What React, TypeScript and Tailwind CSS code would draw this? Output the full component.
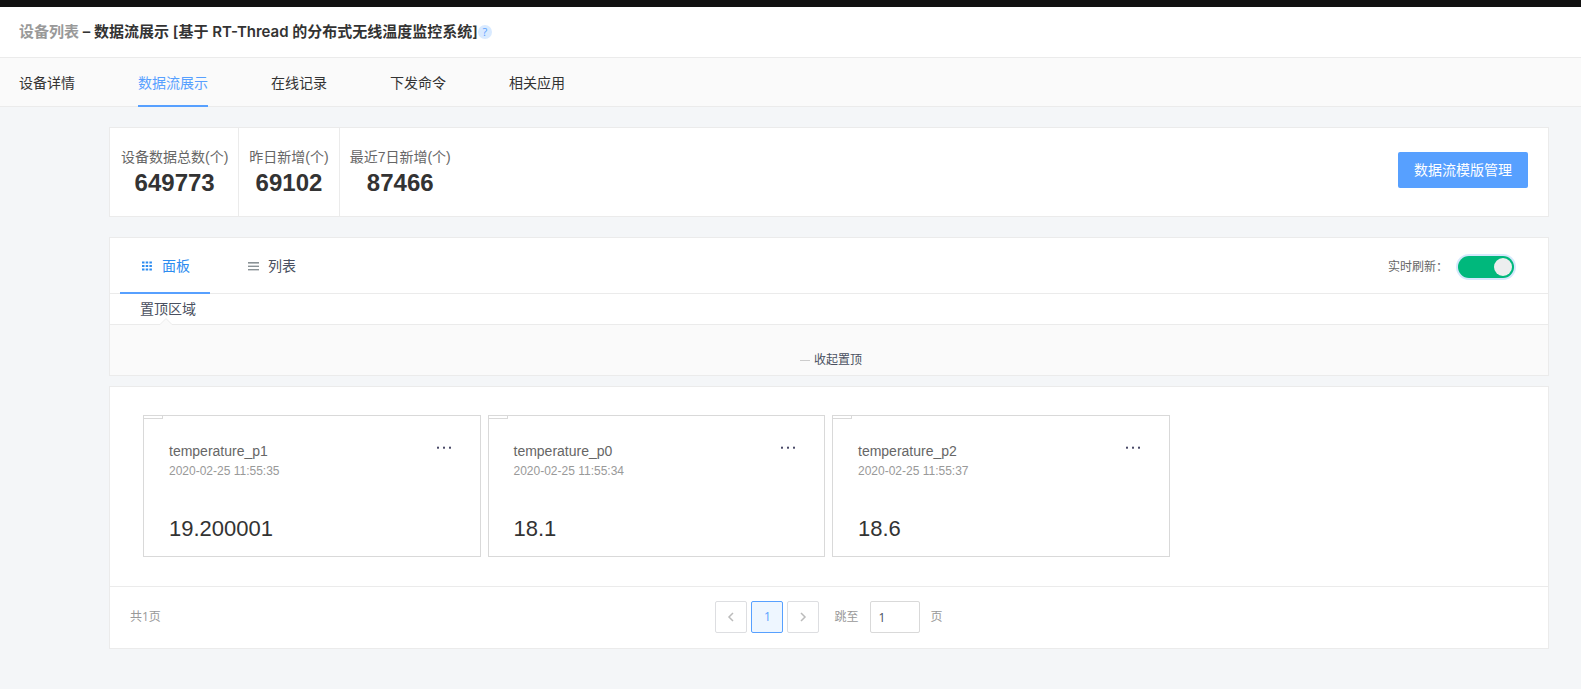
import { useState } from 'react';

type Stream = {
  name: string;
  time: string;
  value: string;
};

const navItems = ['设备详情', '数据流展示', '在线记录', '下发命令', '相关应用'];

const stats = [
  { label: '设备数据总数(个)', value: '649773' },
  { label: '昨日新增(个)', value: '69102' },
  { label: '最近7日新增(个)', value: '87466' },
];

const streams: Stream[] = [
  { name: 'temperature_p1', time: '2020-02-25 11:55:35', value: '19.200001' },
  { name: 'temperature_p0', time: '2020-02-25 11:55:34', value: '18.1' },
  { name: 'temperature_p2', time: '2020-02-25 11:55:37', value: '18.6' },
];

const GridIcon = () => (
  <svg className="w-[10px] h-[10px]" viewBox="0 0 10 10" fill="currentColor" aria-hidden="true">
    {[0.5, 4, 7.5].map((y) =>
      [0, 3.7, 7.4].map((x) => <rect key={`${x}-${y}`} x={x} y={y} width="2.5" height="2" />)
    )}
  </svg>
);

const ListIcon = () => (
  <svg className="w-[11px] h-[10px] text-[#8a9296]" viewBox="0 0 11 10" fill="currentColor" aria-hidden="true">
    <rect x="0" y="1" width="11" height="1.6" />
    <rect x="0" y="4.6" width="11" height="1.4" />
    <rect x="0" y="8" width="11" height="1.4" />
  </svg>
);

const Chevron = ({ d }: { d: string }) => (
  <svg className="w-[10px] h-[10px]" viewBox="0 0 10 10" fill="none" stroke="currentColor" strokeWidth="1.5" aria-hidden="true">
    <path d={d} />
  </svg>
);

const StreamCard = ({ stream }: { stream: Stream }) => (
  <article className="relative h-[142px] border border-[#d9d9d9] pl-[25px] pr-7 pt-[25px] font-['Liberation_Sans',sans-serif]">
    <span className="absolute left-0 top-0 w-[19px] h-[3px] border-r border-b border-[#d9d9d9]" />
    <div className="flex justify-between">
      <h3 className="text-sm leading-5 text-[#666]">{stream.name}</h3>
      <button type="button" aria-label="更多" className="flex h-3 w-4 items-center text-[#4a4a68]">
        <svg className="w-4 h-[3px]" viewBox="0 0 16 3" fill="currentColor" aria-hidden="true">
          <rect x="1" y="0.7" width="2" height="2" />
          <rect x="7" y="0.7" width="2" height="2" />
          <rect x="13" y="0.7" width="2" height="2" />
        </svg>
      </button>
    </div>
    <p className="text-xs leading-5 text-[#999]">{stream.time}</p>
    <p className="mt-8 text-[22px] leading-8 text-[#333]">{stream.value}</p>
  </article>
);

export default function App() {
  const [view, setView] = useState<'panel' | 'list'>('panel');
  const [live, setLive] = useState(true);
  const [page, setPage] = useState('1');

  return (
    <div className="min-h-screen bg-[#f4f6f8] font-['Open_Sans','Noto_Sans_CJK_SC',sans-serif] text-sm text-[#333]">
      <div className="h-[7px] bg-[#111]" />

      {/* Title */}
      <header className="flex h-[51px] items-center border-b border-[#ebebeb] bg-white px-[19px]">
        <h1 className="font-['Inter','Noto_Sans_CJK_SC',sans-serif] text-[15px] font-semibold whitespace-nowrap">
          <a href="#" className="text-[#999]">设备列表</a> – 数据流展示 [基于 RT-Thread 的分布式无线温度监控系统]
        </h1>
        <button type="button" aria-label="帮助" className="size-[14px] rounded-full bg-[#d9eaff] text-[11px] leading-[14px] text-[#57a0ff]">
          ?
        </button>
      </header>

      {/* Navigation */}
      <nav className="flex h-[49px] gap-[63px] border-b border-[#ebebeb] bg-[#fafafa] px-[19px]">
        {navItems.map((item) => (
          <a
            key={item}
            href="#"
            className={
              item === '数据流展示'
                ? '-mb-px border-b-2 border-[#57a0ff] leading-[50px] text-[#57a0ff]'
                : 'leading-[50px]'
            }
          >
            {item}
          </a>
        ))}
      </nav>

      <main className="pt-5 pb-10 pl-[109px] pr-8">
        {/* Statistics */}
        <section className="mb-5 flex justify-between border border-[#ebebeb] bg-white pl-px pr-5">
          <dl className="flex divide-x divide-[#ebebeb] font-['Liberation_Sans','Noto_Sans_CJK_SC',sans-serif]">
            {stats.map((stat) => (
              <div key={stat.label} className="px-[10px] py-[18px] text-center">
                <dt className="leading-[22px] text-[#666]">{stat.label}</dt>
                <dd className="text-2xl leading-[30px] font-bold">{stat.value}</dd>
              </div>
            ))}
          </dl>
          <button type="button" className="mt-6 h-9 rounded-xs bg-[#57a0ff] px-4 text-white">
            数据流模版管理
          </button>
        </section>

        {/* View switch and pinned area */}
        <section className="mb-[10px] border border-[#ebebeb] bg-white">
          <div className="flex h-14 justify-between border-b border-[#ebebeb] pl-[10px] pr-[34px]">
            <div role="tablist" className="flex gap-4">
              <button
                type="button"
                role="tab"
                aria-selected={view === 'panel'}
                onClick={() => setView('panel')}
                className={`-mb-px flex w-[90px] items-center gap-[10px] border-b-2 pt-[2px] pl-[22px] ${view === 'panel' ? 'border-[#57a0ff] text-[#2d8cf0]' : 'border-transparent text-[#495060]'}`}
              >
                <GridIcon />
                面板
              </button>
              <button
                type="button"
                role="tab"
                aria-selected={view === 'list'}
                onClick={() => setView('list')}
                className={`-mb-px flex w-[90px] items-center gap-[9px] border-b-2 pt-[2px] pl-[22px] ${view === 'list' ? 'border-[#57a0ff] text-[#2d8cf0]' : 'border-transparent text-[#495060]'}`}
              >
                <ListIcon />
                列表
              </button>
            </div>
            <label className="flex items-center gap-[10px] pt-[2px] text-xs text-[#666]">
              实时刷新：
              <input
                type="checkbox"
                role="switch"
                checked={live}
                onChange={(e) => setLive(e.target.checked)}
                className="flex h-[22px] w-14 appearance-none items-center rounded-full bg-[#ccc] px-[2px] ring-2 ring-[#d5e8fc] before:size-[18px] before:rounded-full before:bg-[#eceeef] checked:justify-end checked:bg-[#00b87c]"
              />
            </label>
          </div>
          <div className="relative h-[31px] border-b border-[#ebebeb] px-[30px]">
            <h2 className="leading-[30px] text-[#495060]">置顶区域</h2>
            <svg className="absolute left-[50px] -bottom-px w-3 h-[7px]" viewBox="0 0 12 7" aria-hidden="true">
              <path d="M0 6.5 6 .5l6 6V7H0z" fill="#fafafa" />
              <path d="M0 6.5 6 .5l6 6" fill="none" stroke="#ebebeb" />
            </svg>
          </div>
          <div className="flex justify-center bg-[#fafafa] pt-[25px] pb-[5px] pl-1">
            <button type="button" className="flex items-center gap-1 text-xs leading-5 text-[#495060]">
              <span className="h-px w-[10px] bg-[#ccc]" />
              收起置顶
            </button>
          </div>
        </section>

        {/* Data streams */}
        <section className="border border-[#ebebeb] bg-white">
          <div className="grid grid-cols-4 gap-[7px] pt-7 pr-[34px] pb-[29px] pl-[33px]">
            {streams.map((stream) => (
              <StreamCard key={stream.name} stream={stream} />
            ))}
          </div>
          <footer className="grid grid-cols-[1fr_auto_1fr] items-center border-t border-[#ebebeb] px-5 pt-[14px] pb-[15px] text-xs text-[#999]">
            <span>共1页</span>
            <div className="flex items-center gap-[11px]">
              <div className="flex gap-1">
                <button type="button" aria-label="上一页" className="flex size-8 items-center justify-center rounded-xs border border-[#dddee1] text-[#bbb]">
                  <Chevron d="M7 1 3 5l4 4" />
                </button>
                <button type="button" className="size-8 rounded-xs border border-[#57a0ff] bg-[#eef6ff] text-[#57a0ff]">
                  1
                </button>
                <button type="button" aria-label="下一页" className="flex size-8 items-center justify-center rounded-xs border border-[#dddee1] text-[#bbb]">
                  <Chevron d="M3 1l4 4-4 4" />
                </button>
              </div>
              <label htmlFor="page" className="pl-1">跳至</label>
              <input
                id="page"
                value={page}
                onChange={(e) => setPage(e.target.value)}
                className="h-8 w-[50px] rounded-xs border border-[#d9d9d9] px-2 text-[#495060]"
              />
              <span>页</span>
            </div>
          </footer>
        </section>
      </main>
    </div>
  );
}
